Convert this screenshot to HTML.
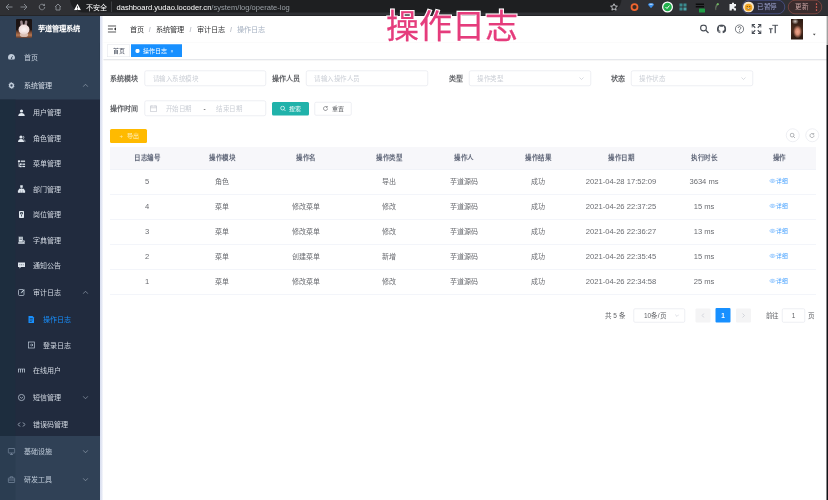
<!DOCTYPE html>
<html lang="zh-CN"><head><meta charset="utf-8"><title>操作日志</title><style>
*{box-sizing:border-box;margin:0;padding:0}
html,body{width:828px;height:500px;overflow:hidden;background:#fff}
body{font-family:"Liberation Sans",sans-serif;color:#606266}
#stage{position:absolute;left:0;top:0;width:1656px;height:1000px;transform:scale(.5);transform-origin:0 0;overflow:hidden;background:#fff;font-size:14px;filter:blur(.7px)}
.a{position:absolute;white-space:nowrap}
.t{position:absolute;white-space:nowrap;line-height:1;transform:translateY(-50%)}
.c{position:absolute;white-space:nowrap;line-height:1;transform:translate(-50%,-50%)}
#chrome{left:0;top:0;width:1656px;height:31.5px;background:#2f3034;border-bottom:1.5px solid #1b1b1d}
#omni{left:140px;top:-30px;width:1103px;height:55px;border-radius:28px;background:#1e1f21}
#side{left:0;top:31.5px;width:200px;height:969px;background:#304156}
.sub{background:#212b3e;left:0;width:200px}
.mi{color:#bfcbd9;font-size:14px}
.ic{position:absolute;transform:translate(-50%,-50%)}
#nav{left:200px;top:31.5px;width:1456px;height:54px;background:#fff}
#tags{left:200px;top:85px;width:1456px;height:34px;background:#fff;border-bottom:1px solid #d8dce5;box-shadow:0 1px 3px 0 rgba(0,0,0,.12),0 0 3px 0 rgba(0,0,0,.04)}
.tag{position:absolute;top:4px;height:25px;border:1px solid #e1e4ea;font-size:12px;color:#495060;background:#fff}
.inp{position:absolute;height:32px;border:1px solid #dcdfe6;border-radius:4px;background:#fff}
.ph{color:#cbcfd6;font-size:13px}
.lab{font-weight:bold;color:#606266;font-size:14px}
.btn{position:absolute;border-radius:3px;font-size:12px}
.th{font-weight:bold;color:#5f6678;font-size:13px}
.td{color:#6a6c71;font-size:14px}
.hl{position:absolute;left:220px;width:1412px;height:1px;background:#e6ebf5}
</style></head><body><div id="stage">
<div class="a" id="chrome"></div><div class="a" id="omni"></div>
<svg class="ic" style="left:18px;top:14px" width="16" height="16" viewBox="0 0 16 16" ><path d="M15 8H2M8 2L2 8l6 6" fill="none" stroke="#84888e" stroke-width="2"/></svg>
<svg class="ic" style="left:48px;top:14px" width="16" height="16" viewBox="0 0 16 16" ><path d="M1 8h13M8 2l6 6-6 6" fill="none" stroke="#84888e" stroke-width="2"/></svg>
<svg class="ic" style="left:84px;top:14px" width="16" height="16" viewBox="0 0 16 16" ><path d="M13.5 8a5.5 5.5 0 1 1-1.6-3.9" fill="none" stroke="#84888e" stroke-width="2"/><path d="M14 1v5H9z" fill="#84888e"/></svg>
<svg class="ic" style="left:116px;top:14px" width="16" height="16" viewBox="0 0 16 16" ><path d="M2 8l6-6 6 6M4 7v7h8V7" fill="none" stroke="#84888e" stroke-width="2"/></svg>
<svg class="ic" style="left:155px;top:14px" width="14" height="13" viewBox="0 0 14 13" ><path d="M7 0L14 13H0z" fill="#fff"/><path d="M7 5v4M7 10.3v1.4" stroke="#202124" stroke-width="1.6"/></svg>
<div class="t" style="left:172px;top:14px;color:#fff;font-size:14px">不安全</div>
<div class="a" style="left:223px;top:3px;width:1px;height:21px;background:#5f6368"></div>
<div class="t" style="left:233px;top:14px;color:#fff;font-size:15.1px">dashboard.yudao.iocoder.cn<span style="color:#9aa0a6">/system/log/operate-log</span></div>
<svg class="ic" style="left:1228px;top:14px" width="16" height="16" viewBox="0 0 16 16" ><path d="M8 1.500l2 4.400 4.800.5-3.600 3.200 1 4.700L8 11.900l-4.200 2.400 1-4.700L1.200 6.400 6 5.900z" fill="none" stroke="#d5d7da" stroke-width="1.700"/></svg>
<svg class="ic" style="left:1269px;top:14px" width="18" height="18" viewBox="0 0 18 18" ><circle cx="9" cy="9" r="6" fill="#3a2a22" stroke="#f0652f" stroke-width="3.5"/></svg>
<svg class="ic" style="left:1302px;top:11px" width="12" height="11" viewBox="0 0 12 11" ><path d="M2 1h8l2 3-6 7-6-7z" fill="#3d8fe8"/><path d="M3.500 2h5l1 1.800H2.500z" fill="#cfe6ff"/></svg>
<svg class="ic" style="left:1335px;top:14px" width="24" height="24" viewBox="0 0 24 24" ><circle cx="12" cy="12" r="11" fill="#fff"/><circle cx="12" cy="12" r="8.5" fill="#21b04b"/><path d="M8 12l3 3 5-6" stroke="#fff" stroke-width="2" fill="none"/></svg>
<svg class="ic" style="left:1366px;top:14px" width="16" height="16" viewBox="0 0 16 16" ><rect x="1" y="1" width="6" height="6" fill="#3b8b8f"/><rect x="9" y="1" width="6" height="6" fill="#3b8b8f"/><rect x="1" y="9" width="6" height="6" fill="#3b8b8f"/><rect x="9" y="9" width="6" height="6" fill="#4aa3a8"/></svg>
<svg class="ic" style="left:1402px;top:15px" width="22" height="22" viewBox="0 0 22 22" ><rect x="0" y="3" width="17" height="3" fill="#0c0c0c"/><rect x="0" y="8" width="17" height="3" fill="#0c0c0c"/><rect x="7" y="13" width="12" height="8" rx="1" fill="#1f9d45"/></svg>
<svg class="ic" style="left:1434px;top:13px" width="12" height="16" viewBox="0 0 12 16" ><path d="M8 1C3 4 1 9 3 16l1.500-.8C4 10 6 6 10 3z" fill="#5f6f5c"/><circle cx="7.500" cy="3.500" r="2.200" fill="#6fbf5f"/></svg>
<svg class="ic" style="left:1466px;top:14px" width="18" height="18" viewBox="0 0 18 18" ><path d="M7 1.5a2 2 0 0 1 4 0V3h4v4.5h-1.5a2 2 0 0 0 0 4H15V16h-4.5v-1.5a2 2 0 0 0-4 0V16H2V3h5z" fill="#f1f3f4"/></svg>
<div class="a" style="left:1484px;top:0;width:86px;height:28px;border-radius:14px;border:1px solid #5c6bc0;background:#2b2c3a"></div>
<svg class="ic" style="left:1497px;top:14px" width="22" height="22" viewBox="0 0 22 22" ><circle cx="11" cy="11" r="11" fill="#f7e6c8"/><circle cx="11" cy="12" r="7.5" fill="#f5a623"/><circle cx="8.5" cy="10" r="1.2" fill="#5a3a00"/><circle cx="13.5" cy="10" r="1.2" fill="#5a3a00"/><path d="M7 13.5q4 4 8 0" stroke="#5a3a00" stroke-width="1.2" fill="#fff"/></svg>
<div class="t" style="left:1514px;top:14px;color:#9ea4d0;font-size:13px">已暂停</div>
<div class="a" style="left:1576px;top:0;width:68px;height:28px;border-radius:14px;border:1px solid #b4584e;background:#3a2c2d"></div>
<div class="t" style="left:1590px;top:14px;color:#c7a3a2;font-size:13px">更新</div>
<svg class="ic" style="left:1633px;top:14px" width="4" height="16" viewBox="0 0 4 16" ><circle cx="2" cy="2" r="1.7" fill="#ee675c"/><circle cx="2" cy="8" r="1.7" fill="#ee675c"/><circle cx="2" cy="14" r="1.7" fill="#ee675c"/></svg>
<div class="a" id="side"></div>
<div class="a sub" style="top:199px;height:672.5px"></div>
<div class="a" style="left:0;top:199px;width:31px;height:672.5px;background:#1c2f3f;opacity:.7"></div>
<div class="a" style="left:0;top:871.5px;width:31px;height:130px;background:#2a3c50;opacity:.7"></div>
<div class="a" style="left:32px;top:38px;width:32px;height:38px;border-radius:2px;overflow:hidden;background:linear-gradient(180deg,#1a1212 0,#1d1414 55%,#7a4a34 70%,#b87852 85%,#5a3a30 100%)"><div class="a" style="left:9px;top:3px;width:5px;height:16px;border-radius:3px;background:#b9a3aa;opacity:.8;transform:rotate(-8deg)"></div><div class="a" style="left:17px;top:3px;width:5px;height:16px;border-radius:3px;background:#b9a3aa;opacity:.8;transform:rotate(8deg)"></div><div class="a" style="left:5px;top:11px;width:22px;height:20px;border-radius:50%;background:radial-gradient(ellipse at 50% 50%,#fbf3f3 0,#f0dede 60%,#c9a9a6 100%)"></div><div class="a" style="left:8px;top:27px;width:16px;height:9px;border-radius:40%;background:#e6d2cc;opacity:.8"></div></div>
<div class="t" style="left:76px;top:57px;color:#fff;font-weight:bold;font-size:14.5px">芋道管理系统</div>
<svg class="ic" style="left:22.5px;top:114.4px" width="16" height="16" viewBox="0 0 16 16" ><path d="M8 2a7 7 0 0 0-7 7c0 1.6.5 3 1.4 4.2h11.2A7 7 0 0 0 8 2z" fill="#bfcbd9"/><path d="M8 10l2.5-4" stroke="#304156" stroke-width="1.4"/><circle cx="8" cy="10.5" r="1.4" fill="#304156"/></svg>
<div class="t" style="left:47.5px;top:114.4px;color:#c4cfdc;font-size:14px">首页</div>
<svg class="ic" style="left:22.5px;top:170.6px" width="16" height="16" viewBox="0 0 16 16" ><path d="M8 1l1.2 2 2.3-.4.4 2.300 2 1.200-1 2.100 1 2.100-2 1.200-.4 2.300-2.300-.4L8 15l-1.2-2-2.300.4-.4-2.300-2-1.200 1-2.100-1-2.100 2-1.200.4-2.300 2.300.4z" fill="#bfcbd9"/><circle cx="8" cy="8" r="2.3" fill="#304156"/></svg>
<div class="t" style="left:47.5px;top:170.6px;color:#d6dee8;font-size:14px">系统管理</div>
<svg class="ic" style="left:171px;top:170.6px" width="12" height="7" viewBox="0 0 12 7" ><path d="M1 6l5-5 5 5" fill="none" stroke="#9aa7b6" stroke-width="1.3"/></svg>
<svg class="ic" style="left:42.5px;top:225.0px" width="16" height="16" viewBox="0 0 16 16" ><circle cx="8" cy="5" r="3.2" fill="#dfe6ee"/><path d="M1.500 15c0-4 3-6 6.500-6s6.500 2 6.500 6z" fill="#dfe6ee"/></svg>
<div class="t" style="left:66px;top:225.0px;color:#d2d9e2;font-size:14px">用户管理</div>
<svg class="ic" style="left:42.5px;top:276.6px" width="16" height="16" viewBox="0 0 16 16" ><circle cx="7" cy="5" r="3.200" fill="#dfe6ee"/><path d="M1 15c0-4 2.500-6 6-6s6 2 6 6z" fill="#dfe6ee"/><path d="M11 3a3 3 0 0 1 0 5.500M13 10c1.500.8 2.300 2.400 2.300 5" stroke="#dfe6ee" stroke-width="1.500" fill="none"/></svg>
<div class="t" style="left:66px;top:276.6px;color:#d2d9e2;font-size:14px">角色管理</div>
<svg class="ic" style="left:42.5px;top:327.4px" width="16" height="16" viewBox="0 0 16 16" ><path d="M1 2h4v3H1zM7 2.500h8v2H7zM5 8h3v3H5zM10 8.500h5v2h-5zM5 13h3v2.500H5zM10 13.200h5v2h-5zM2.500 5v9.500H5" fill="#dfe6ee" stroke="#dfe6ee" stroke-width=".6"/></svg>
<div class="t" style="left:66px;top:327.4px;color:#d2d9e2;font-size:14px">菜单管理</div>
<svg class="ic" style="left:42.5px;top:378.4px" width="16" height="16" viewBox="0 0 16 16" ><path d="M6 1h4v4H6zM1 11h4v4H1zM6 11h4v4H6zM11 11h4v4h-4zM8 5v6M3 11V8h10v3" fill="#dfe6ee" stroke="#dfe6ee" stroke-width="1"/></svg>
<div class="t" style="left:66px;top:378.4px;color:#d2d9e2;font-size:14px">部门管理</div>
<svg class="ic" style="left:42.5px;top:429.4px" width="16" height="16" viewBox="0 0 16 16" ><rect x="3" y="1" width="10" height="14" rx="1.5" fill="#dfe6ee"/><path d="M6 4h4v3H6zM8 9v3" stroke="#1f2d3d" stroke-width="1.600" fill="none"/></svg>
<div class="t" style="left:66px;top:429.4px;color:#d2d9e2;font-size:14px">岗位管理</div>
<svg class="ic" style="left:42.5px;top:480.4px" width="16" height="16" viewBox="0 0 16 16" ><path d="M2 1h9v11H2zM4 4h5M4 7h5" fill="#dfe6ee" stroke="#1f2d3d" stroke-width="1"/><path d="M2 13h12v2H2zM12 8l2.500 2.500L12 13" fill="#dfe6ee" stroke="#dfe6ee"/></svg>
<div class="t" style="left:66px;top:480.4px;color:#d2d9e2;font-size:14px">字典管理</div>
<svg class="ic" style="left:42.5px;top:531.2px" width="16" height="16" viewBox="0 0 16 16" ><path d="M1 2h14v9H7l-3 3v-3H1z" fill="#dfe6ee"/><path d="M4 6.500h1.500M7.300 6.500h1.500M10.600 6.500h1.500" stroke="#1f2d3d" stroke-width="1.500"/></svg>
<div class="t" style="left:66px;top:531.2px;color:#d2d9e2;font-size:14px">通知公告</div>
<svg class="ic" style="left:42.5px;top:584.6px" width="16" height="16" viewBox="0 0 16 16" ><rect x="2" y="2" width="11" height="12" rx="2" fill="none" stroke="#bfcbd9" stroke-width="1.500"/><path d="M6 10l1-3 6-6 2 2-6 6z" fill="#bfcbd9" stroke="#1f2d3d" stroke-width=".8"/></svg>
<div class="t" style="left:66px;top:584.6px;color:#d2d9e2;font-size:14px">审计日志</div>
<svg class="ic" style="left:171px;top:584.6px" width="12" height="7" viewBox="0 0 12 7" ><path d="M1 6l5-5 5 5" fill="none" stroke="#9aa7b6" stroke-width="1.3"/></svg>
<svg class="ic" style="left:62.5px;top:639.0px" width="16" height="16" viewBox="0 0 16 16" ><path d="M2 1h8l3 3v11H2z" fill="#1890ff"/><path d="M4.500 6h6M4.500 9h6M4.500 12h4" stroke="#1f2d3d" stroke-width="1.200"/></svg>
<div class="t" style="left:86px;top:639.0px;color:#1890ff;font-size:14px">操作日志</div>
<svg class="ic" style="left:62.5px;top:690.0px" width="16" height="16" viewBox="0 0 16 16" ><rect x="2" y="2" width="12" height="12" fill="none" stroke="#bfcbd9" stroke-width="1.400"/><path d="M5 8h6M8.500 5.500L11 8l-2.500 2.500" fill="none" stroke="#bfcbd9" stroke-width="1.400"/></svg>
<div class="t" style="left:86px;top:690.0px;color:#d2d9e2;font-size:14px">登录日志</div>
<svg class="ic" style="left:42.5px;top:741.0px" width="16" height="16" viewBox="0 0 16 16" ><path d="M2 12V5M6 12V5M10 12V5M14 12V5" stroke="#bfcbd9" stroke-width="1.600"/><path d="M1 5h14" stroke="#bfcbd9" stroke-width="1.200"/></svg>
<div class="t" style="left:66px;top:741.0px;color:#d2d9e2;font-size:14px">在线用户</div>
<svg class="ic" style="left:42.5px;top:794.6px" width="16" height="16" viewBox="0 0 16 16" ><circle cx="8" cy="8" r="6.200" fill="none" stroke="#bfcbd9" stroke-width="1.500"/><path d="M5 7l3 2.500L11 7" fill="none" stroke="#bfcbd9" stroke-width="1.400"/></svg>
<div class="t" style="left:66px;top:794.6px;color:#d2d9e2;font-size:14px">短信管理</div>
<svg class="ic" style="left:171px;top:794.6px" width="12" height="7" viewBox="0 0 12 7" ><path d="M1 1l5 5 5-5" fill="none" stroke="#9aa7b6" stroke-width="1.3"/></svg>
<svg class="ic" style="left:42.5px;top:848.6px" width="16" height="16" viewBox="0 0 16 16" ><path d="M5 4L1 8l4 4M11 4l4 4-4 4" fill="none" stroke="#bfcbd9" stroke-width="1.600"/></svg>
<div class="t" style="left:66px;top:848.6px;color:#d2d9e2;font-size:14px">错误码管理</div>
<svg class="ic" style="left:22.5px;top:903.0px" width="16" height="16" viewBox="0 0 16 16" ><rect x="1.500" y="2" width="13" height="9" rx="1" fill="none" stroke="#7d8ea3" stroke-width="1.400"/><path d="M5 14h6M8 11v3" stroke="#7d8ea3" stroke-width="1.400"/></svg>
<div class="t" style="left:47.5px;top:903.0px;color:#bfcbd9;font-size:14px">基础设施</div>
<svg class="ic" style="left:171px;top:903.0px" width="12" height="7" viewBox="0 0 12 7" ><path d="M1 1l5 5 5-5" fill="none" stroke="#9aa7b6" stroke-width="1.3"/></svg>
<svg class="ic" style="left:22.5px;top:959.0px" width="16" height="16" viewBox="0 0 16 16" ><rect x="1.500" y="5" width="13" height="9" rx="1" fill="none" stroke="#7d8ea3" stroke-width="1.400"/><path d="M5.500 5V2.500h5V5M1.500 9h13" fill="none" stroke="#7d8ea3" stroke-width="1.400"/></svg>
<div class="t" style="left:47.5px;top:959.0px;color:#bfcbd9;font-size:14px">研发工具</div>
<svg class="ic" style="left:171px;top:959.0px" width="12" height="7" viewBox="0 0 12 7" ><path d="M1 1l5 5 5-5" fill="none" stroke="#9aa7b6" stroke-width="1.3"/></svg>
<div class="a" id="nav"></div>
<svg class="ic" style="left:224px;top:57.5px" width="17" height="15.5" viewBox="0 0 18 16" ><path d="M0 1.500h18M0 8h11M0 14.500h18" stroke="#303133" stroke-width="2"/><path d="M17.500 4.500v7L13 8z" fill="#303133"/></svg>
<div class="t" style="left:259px;top:58.5px;font-size:14.3px;color:#303133">首页<span style="color:#c0c4cc;margin:0 10.6px;font-weight:bold">/</span>系统管理<span style="color:#c0c4cc;margin:0 10.6px;font-weight:bold">/</span>审计日志<span style="color:#c0c4cc;margin:0 10.6px;font-weight:bold">/</span><span style="color:#a6b1c1">操作日志</span></div>
<svg class="ic" style="left:1409px;top:58px" width="19" height="19" viewBox="0 0 19 19" ><circle cx="7.500" cy="7.500" r="5.800" fill="none" stroke="#4a4f57" stroke-width="2.200"/><path d="M12 12l5.500 5.500" stroke="#4a4f57" stroke-width="2.600"/></svg>
<svg class="ic" style="left:1443px;top:58px" width="19" height="19" viewBox="0 0 19 19" ><path d="M9.500 0.500a9 9 0 0 0-2.800 17.600c.4.100.6-.2.600-.4v-1.700c-2.500.5-3-1.100-3-1.100-.4-1-1-1.300-1-1.300-.8-.6.100-.6.100-.6.900.100 1.400.9 1.400.9.800 1.400 2.100 1 2.600.8.100-.6.300-1 .6-1.200-2-.2-4.100-1-4.100-4.500 0-1 .4-1.800.9-2.400-.100-.2-.4-1.100.100-2.400 0 0 .8-.2 2.500.9a8.600 8.600 0 0 1 4.500 0c1.700-1.100 2.500-.9 2.500-.9.500 1.300.2 2.200.100 2.400.6.600.9 1.400.9 2.400 0 3.500-2.100 4.300-4.100 4.500.3.300.6.800.6 1.700v2.500c0 .2.200.5.600.4A9 9 0 0 0 9.500.5z" fill="#4a4f57"/></svg>
<svg class="ic" style="left:1479px;top:58px" width="19" height="19" viewBox="0 0 19 19" ><circle cx="9.500" cy="9.500" r="8.300" fill="none" stroke="#4a4f57" stroke-width="1.500"/><path d="M6.800 7.500a2.700 2.700 0 1 1 3.900 2.300c-.8.500-1.200 1-1.200 2" fill="none" stroke="#4a4f57" stroke-width="1.600"/><circle cx="9.500" cy="14.200" r="1" fill="#4a4f57"/></svg>
<svg class="ic" style="left:1513px;top:58px" width="20" height="20" viewBox="0 0 20 20" ><path d="M1 7V1h6M13 1h6v6M19 13v6h-6M7 19H1v-6M1.500 1.500l6 6M18.500 1.500l-6 6M18.500 18.500l-6-6M1.500 18.500l6-6" fill="none" stroke="#4a4f57" stroke-width="2.200"/></svg>
<svg class="ic" style="left:1547px;top:58px" width="19" height="19" viewBox="0 0 19 19" ><path d="M7 2h12M13 2v16M0 9h8M4 9v9" fill="none" stroke="#4a4f57" stroke-width="2.400"/></svg>
<div class="a" style="left:1582px;top:38px;width:24px;height:40.5px;background:radial-gradient(ellipse 7px 6px at 35% 12%,#cfc6c0 0,rgba(207,198,192,0) 100%),radial-gradient(ellipse 9px 13px at 55% 62%,#eea58c 0,#d88d74 45%,rgba(90,50,35,0) 100%),linear-gradient(180deg,#2c1a12,#4a2c1e 50%,#2a1810)"></div>
<svg class="ic" style="left:1628.5px;top:69px" width="7" height="4.5" viewBox="0 0 7 4.5" ><path d="M0 0h6L3 4z" fill="#444"/></svg>
<div class="a" id="tags"><div class="tag" style="left:14px;width:46px"><span class="c" style="left:50%;top:50%">首页</span></div><div class="tag" style="left:62px;width:102px;background:#1890ff;border-color:#1890ff;color:#fff"><span class="a" style="left:8px;top:8px;width:8px;height:8px;border-radius:35%;background:#fff"></span><span class="t" style="left:22px;top:50%">操作日志</span><span class="t" style="left:78px;top:50%;font-size:10px;color:#d6ebff">×</span></div></div>
<div class="a" style="left:199.5px;top:32px;width:7px;height:968px;background:linear-gradient(90deg,#d9dff0 0,#e3e7f4 45%,#fff 100%)"></div>
<div class="t" style="left:772.5px;top:51.5px;font-size:66px;font-weight:300;color:#fff;-webkit-text-stroke:5px #fff">操作日志</div>
<div class="t" style="left:772.5px;top:51.5px;font-size:66px;font-weight:300;color:#e53c7c;-webkit-text-stroke:.5px #e53c7c">操作日志</div>
<div class="t lab" style="left:220px;top:156.5px">系统模块</div>
<div class="inp" style="left:289px;top:141px;width:243px;height:31px"><span class="t ph" style="left:15px;top:50%">请输入系统模块</span></div>
<div class="t lab" style="left:544px;top:156.5px">操作人员</div>
<div class="inp" style="left:612px;top:141px;width:244px;height:31px"><span class="t ph" style="left:15px;top:50%">请输入操作人员</span></div>
<div class="t lab" style="left:897px;top:156.5px">类型</div>
<div class="inp" style="left:938px;top:141px;width:244px;height:31px"><span class="t ph" style="left:15px;top:50%">操作类型</span><svg class="ic" style="left:224px;top:50%" width="10" height="6" viewBox="0 0 10 6"><path d="M1 1l4 4 4-4" fill="none" stroke="#c0c4cc" stroke-width="1.200"/></svg></div>
<div class="t lab" style="left:1222px;top:156.5px">状态</div>
<div class="inp" style="left:1262px;top:141px;width:244px;height:31px"><span class="t ph" style="left:15px;top:50%">操作状态</span><svg class="ic" style="left:224px;top:50%" width="10" height="6" viewBox="0 0 10 6"><path d="M1 1l4 4 4-4" fill="none" stroke="#c0c4cc" stroke-width="1.200"/></svg></div>
<div class="t lab" style="left:220px;top:216.5px">操作时间</div>
<div class="inp" style="left:289px;top:201px;width:243px;height:31px"><svg class="ic" style="left:16.500px;top:50%" width="15" height="14" viewBox="0 0 14 14" preserveAspectRatio="none"><rect x="1" y="2" width="12" height="11" fill="none" stroke="#c0c4cc" stroke-width="1.200"/><path d="M1 5.500h12M4 .5v3M10 .5v3" stroke="#c0c4cc" stroke-width="1.200"/></svg><span class="c ph" style="left:67.500px;top:50%">开始日期</span><span class="c" style="left:119px;top:50%;color:#303133;font-size:13px">-</span><span class="c ph" style="left:168px;top:50%">结束日期</span></div>
<div class="btn" style="left:544px;top:203.500px;width:74px;height:27.500px;background:#20b2aa"><svg class="ic" style="left:22px;top:50%" width="12" height="12" viewBox="0 0 12 12"><circle cx="5.200" cy="5.200" r="3.800" fill="none" stroke="#fff" stroke-width="1.400"/><path d="M8 8l3 3" stroke="#fff" stroke-width="1.400"/></svg><span class="t" style="left:34px;top:50%;color:#fff;font-weight:normal">搜索</span></div>
<div class="btn" style="left:629px;top:203.500px;width:74px;height:27.500px;background:#fff;border:1px solid #dcdfe6"><svg class="ic" style="left:21px;top:50%" width="12" height="12" viewBox="0 0 12 12"><path d="M10 6a4 4 0 1 1-1.200-2.800M9.500 1v2.500H7" fill="none" stroke="#606266" stroke-width="1.300"/></svg><span class="t" style="left:33px;top:50%;color:#606266;font-weight:normal">重置</span></div>
<div class="btn" style="left:220px;top:257.500px;width:74px;height:28px;background:#ffba00"><span class="t" style="left:19px;top:50%;color:#ffe9a8;font-size:12px">+</span><span class="t" style="left:33px;top:50%;color:#fff0c0;font-size:12px">导出</span></div>
<div class="a" style="left:1571.5px;top:257.0px;width:27px;height:27px;border-radius:50%;border:1px solid #dcdfe6;background:#fff"></div>
<svg class="ic" style="left:1585px;top:270.5px" width="12" height="12" viewBox="0 0 12 12" ><circle cx="5.200" cy="5.200" r="3.800" fill="none" stroke="#8a8d93" stroke-width="1.300"/><path d="M8 8l3 3" stroke="#8a8d93" stroke-width="1.300"/></svg>
<div class="a" style="left:1610.5px;top:257.0px;width:27px;height:27px;border-radius:50%;border:1px solid #dcdfe6;background:#fff"></div>
<svg class="ic" style="left:1624px;top:270.5px" width="12" height="12" viewBox="0 0 12 12" ><path d="M10 6a4 4 0 1 1-1.200-2.800M9.500 1v2.500H7" fill="none" stroke="#8a8d93" stroke-width="1.300"/></svg>
<div class="a" style="left:220px;top:293.500px;width:1412px;height:45px;background:#f7f7fa"></div>
<div class="c th" style="left:294px;top:315.500px">日志编号</div>
<div class="c th" style="left:444px;top:315.500px">操作模块</div>
<div class="c th" style="left:612px;top:315.500px">操作名</div>
<div class="c th" style="left:778px;top:315.500px">操作类型</div>
<div class="c th" style="left:928px;top:315.500px">操作人</div>
<div class="c th" style="left:1076px;top:315.500px">操作结果</div>
<div class="c th" style="left:1242px;top:315.500px">操作日期</div>
<div class="c th" style="left:1408px;top:315.500px">执行时长</div>
<div class="c th" style="left:1558px;top:315.500px">操作</div>
<div class="hl" style="top:338.2px"></div>
<div class="c td" style="left:294px;top:363.4px;font-size:15.2px">5</div>
<div class="c td" style="left:444px;top:363.4px">角色</div>
<div class="c td" style="left:778px;top:363.4px">导出</div>
<div class="c td" style="left:928px;top:363.4px">芋道源码</div>
<div class="c td" style="left:1076px;top:363.4px">成功</div>
<div class="c td" style="left:1242px;top:363.4px;font-size:15.2px">2021-04-28 17:52:09</div>
<div class="c td" style="left:1408px;top:363.4px;font-size:15.2px">3634 ms</div>
<div class="c" style="left:1557px;top:362.4px;color:#4aa3ff;font-size:11.6px"><svg width="13" height="9" viewBox="0 0 13 9" style="vertical-align:0"><path d="M.5 4.500Q6.500-2.500 12.500 4.500 6.500 11.500.5 4.500z" fill="none" stroke="#5aabff" stroke-width="1.100"/><circle cx="6.500" cy="4.500" r="1.700" fill="none" stroke="#5aabff" stroke-width="1.100"/></svg>详细</div>
<div class="hl" style="top:387.6px"></div>
<div class="c td" style="left:294px;top:413.4px;font-size:15.2px">4</div>
<div class="c td" style="left:444px;top:413.4px">菜单</div>
<div class="c td" style="left:612px;top:413.4px">修改菜单</div>
<div class="c td" style="left:778px;top:413.4px">修改</div>
<div class="c td" style="left:928px;top:413.4px">芋道源码</div>
<div class="c td" style="left:1076px;top:413.4px">成功</div>
<div class="c td" style="left:1242px;top:413.4px;font-size:15.2px">2021-04-26 22:37:25</div>
<div class="c td" style="left:1408px;top:413.4px;font-size:15.2px">15 ms</div>
<div class="c" style="left:1557px;top:412.4px;color:#4aa3ff;font-size:11.6px"><svg width="13" height="9" viewBox="0 0 13 9" style="vertical-align:0"><path d="M.5 4.500Q6.500-2.500 12.500 4.500 6.500 11.500.5 4.500z" fill="none" stroke="#5aabff" stroke-width="1.100"/><circle cx="6.500" cy="4.500" r="1.700" fill="none" stroke="#5aabff" stroke-width="1.100"/></svg>详细</div>
<div class="hl" style="top:437.6px"></div>
<div class="c td" style="left:294px;top:463.4px;font-size:15.2px">3</div>
<div class="c td" style="left:444px;top:463.4px">菜单</div>
<div class="c td" style="left:612px;top:463.4px">修改菜单</div>
<div class="c td" style="left:778px;top:463.4px">修改</div>
<div class="c td" style="left:928px;top:463.4px">芋道源码</div>
<div class="c td" style="left:1076px;top:463.4px">成功</div>
<div class="c td" style="left:1242px;top:463.4px;font-size:15.2px">2021-04-26 22:36:27</div>
<div class="c td" style="left:1408px;top:463.4px;font-size:15.2px">13 ms</div>
<div class="c" style="left:1557px;top:462.4px;color:#4aa3ff;font-size:11.6px"><svg width="13" height="9" viewBox="0 0 13 9" style="vertical-align:0"><path d="M.5 4.500Q6.500-2.500 12.500 4.500 6.500 11.500.5 4.500z" fill="none" stroke="#5aabff" stroke-width="1.100"/><circle cx="6.500" cy="4.500" r="1.700" fill="none" stroke="#5aabff" stroke-width="1.100"/></svg>详细</div>
<div class="hl" style="top:487.6px"></div>
<div class="c td" style="left:294px;top:513.4px;font-size:15.2px">2</div>
<div class="c td" style="left:444px;top:513.4px">菜单</div>
<div class="c td" style="left:612px;top:513.4px">创建菜单</div>
<div class="c td" style="left:778px;top:513.4px">新增</div>
<div class="c td" style="left:928px;top:513.4px">芋道源码</div>
<div class="c td" style="left:1076px;top:513.4px">成功</div>
<div class="c td" style="left:1242px;top:513.4px;font-size:15.2px">2021-04-26 22:35:45</div>
<div class="c td" style="left:1408px;top:513.4px;font-size:15.2px">15 ms</div>
<div class="c" style="left:1557px;top:512.4px;color:#4aa3ff;font-size:11.6px"><svg width="13" height="9" viewBox="0 0 13 9" style="vertical-align:0"><path d="M.5 4.500Q6.500-2.500 12.500 4.500 6.500 11.500.5 4.500z" fill="none" stroke="#5aabff" stroke-width="1.100"/><circle cx="6.500" cy="4.500" r="1.700" fill="none" stroke="#5aabff" stroke-width="1.100"/></svg>详细</div>
<div class="hl" style="top:537.6px"></div>
<div class="c td" style="left:294px;top:563.4px;font-size:15.2px">1</div>
<div class="c td" style="left:444px;top:563.4px">菜单</div>
<div class="c td" style="left:612px;top:563.4px">修改菜单</div>
<div class="c td" style="left:778px;top:563.4px">修改</div>
<div class="c td" style="left:928px;top:563.4px">芋道源码</div>
<div class="c td" style="left:1076px;top:563.4px">成功</div>
<div class="c td" style="left:1242px;top:563.4px;font-size:15.2px">2021-04-26 22:34:58</div>
<div class="c td" style="left:1408px;top:563.4px;font-size:15.2px">25 ms</div>
<div class="c" style="left:1557px;top:562.4px;color:#4aa3ff;font-size:11.6px"><svg width="13" height="9" viewBox="0 0 13 9" style="vertical-align:0"><path d="M.5 4.500Q6.500-2.500 12.500 4.500 6.500 11.500.5 4.500z" fill="none" stroke="#5aabff" stroke-width="1.100"/><circle cx="6.500" cy="4.500" r="1.700" fill="none" stroke="#5aabff" stroke-width="1.100"/></svg>详细</div>
<div class="hl" style="top:587.6px"></div>
<div class="t" style="left:1210px;top:631px;font-size:13px;color:#606266">共 5 条</div>
<div class="inp" style="left:1267px;top:617px;width:103px;height:28px;border-radius:3px"><span class="c" style="left:42px;top:50%;font-size:13px;color:#606266">10条/页</span><svg class="ic" style="left:86px;top:50%" width="9" height="6" viewBox="0 0 10 6"><path d="M1 1l4 4 4-4" fill="none" stroke="#c0c4cc" stroke-width="1.200"/></svg></div>
<div class="a" style="left:1391px;top:617px;width:30px;height:28px;border-radius:2px;background:#f4f4f5"><svg class="ic" style="left:50%;top:50%" width="6" height="10" viewBox="0 0 6 10"><path d="M5 1L1 5l4 4" fill="none" stroke="#c0c4cc" stroke-width="1.300"/></svg></div>
<div class="a" style="left:1431px;top:616px;width:30px;height:29px;border-radius:2px;background:#1890ff"><span class="c" style="left:50%;top:50%;color:#fff;font-weight:bold;font-size:13px">1</span></div>
<div class="a" style="left:1472px;top:617px;width:30px;height:28px;border-radius:2px;background:#f4f4f5"><svg class="ic" style="left:50%;top:50%" width="6" height="10" viewBox="0 0 6 10"><path d="M1 1l4 4-4 4" fill="none" stroke="#c0c4cc" stroke-width="1.300"/></svg></div>
<div class="t" style="left:1531px;top:631px;font-size:13px;color:#606266">前往</div>
<div class="inp" style="left:1564px;top:617px;width:46px;height:28px;border-radius:3px"><span class="c" style="left:50%;top:50%;font-size:13px;color:#606266">1</span></div>
<div class="t" style="left:1615px;top:631px;font-size:13px;color:#606266">页</div>
<div class="a" style="left:1652.5px;top:32px;width:4px;height:58px;background:linear-gradient(90deg,#b5b5b5,#8c8c8c)"></div>
<div class="a" style="left:1652.5px;top:89.5px;width:4px;height:911px;background:#121216"></div>
</div></body></html>
